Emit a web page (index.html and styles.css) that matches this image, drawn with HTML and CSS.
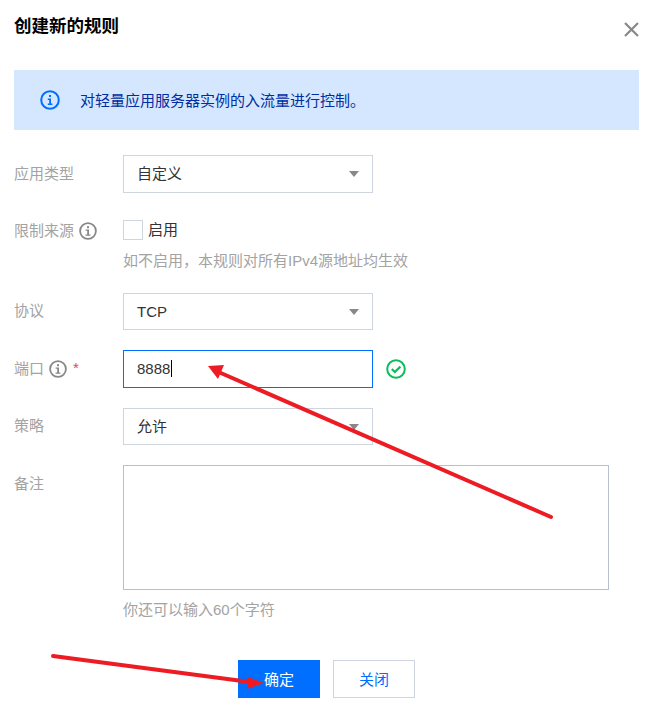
FILE: index.html
```html
<!DOCTYPE html>
<html>
<head>
    <title>创建新的规则</title>
    <link rel="stylesheet" href="styles.css">
</head>
<body>
    <div class="dialog">
        <div class="dialog-head">
            <h2>创建新的规则</h2>
            <svg class="close-icon" width="15" height="15" viewBox="0 0 15 15">
                <path d="M1 1 L14 14 M14 1 L1 14" stroke="#888" stroke-width="2.2" fill="none"/>
            </svg>
        </div>

        <div class="notice">
            <svg class="notice-icon" width="20" height="20" viewBox="0 0 20 20">
                <circle cx="10" cy="10" r="8.8" stroke="#006eff" stroke-width="2" fill="none"/>
                <rect x="9" y="5" width="2" height="2" fill="#006eff"/>
                <path d="M7.8 8.6 H11 V13.6 H12.4 V15 H7.8 V13.6 H9.2 V10 H7.8 Z" fill="#006eff"/>
            </svg>
            <span class="notice-text">对轻量应用服务器实例的入流量进行控制。</span>
        </div>

        <form class="rule-form">
            <div class="form-row row-type">
                <label class="form-label">应用类型</label>
                <div class="select">自定义</div>
            </div>

            <div class="form-row row-source">
                <label class="form-label">限制来源
                    <svg class="help-icon" width="18" height="18" viewBox="0 0 18 18">
                        <circle cx="9" cy="9" r="7.9" stroke="#888" stroke-width="1.8" fill="none"/>
                        <rect x="8" y="4.2" width="2" height="2" fill="#888"/>
                        <path d="M6.6 7.4 H10 V12.4 H11.4 V13.8 H6.6 V12.4 H8.2 V8.8 H6.6 Z" fill="#888"/>
                    </svg>
                </label>
                <div class="field-col">
                    <div class="check-line">
                        <span class="checkbox"></span>
                        <span class="check-text">启用</span>
                    </div>
                    <p class="hint hint-source">如不启用，本规则对所有IPv4源地址均生效</p>
                </div>
            </div>

            <div class="form-row">
                <label class="form-label">协议</label>
                <div class="select select-short">TCP</div>
            </div>

            <div class="form-row">
                <label class="form-label">端口
                    <svg class="help-icon" width="18" height="18" viewBox="0 0 18 18">
                        <circle cx="9" cy="9" r="7.9" stroke="#888" stroke-width="1.8" fill="none"/>
                        <rect x="8" y="4.2" width="2" height="2" fill="#888"/>
                        <path d="M6.6 7.4 H10 V12.4 H11.4 V13.8 H6.6 V12.4 H8.2 V8.8 H6.6 Z" fill="#888"/>
                    </svg>
                    <span class="required">*</span>
                </label>
                <div class="text-input">8888<span class="caret"></span></div>
                <svg class="ok-icon" width="20" height="20" viewBox="0 0 20 20">
                    <circle cx="10" cy="10" r="8.8" stroke="#0abf5b" stroke-width="2" fill="none"/>
                    <path d="M5.8 10 L8.8 13 L14.4 7.6" stroke="#0abf5b" stroke-width="2.2" fill="none"/>
                </svg>
            </div>

            <div class="form-row">
                <label class="form-label">策略</label>
                <div class="select select-short">允许</div>
            </div>

            <div class="form-row row-note">
                <label class="form-label">备注</label>
                <div class="field-col">
                    <div class="textarea"></div>
                    <p class="hint hint-note">你还可以输入60个字符</p>
                </div>
            </div>

            <div class="form-actions">
                <button type="button" class="btn btn-primary">确定</button>
                <button type="button" class="btn btn-plain">关闭</button>
            </div>
        </form>

        <!-- red arrows drawn over the screenshot -->
        <svg class="annotations" width="668" height="713" viewBox="0 0 668 713">
            <g fill="#ed1c24">
                <path d="M551 517 L214 370" stroke="#ed1c24" stroke-width="4" stroke-linecap="round"/>
                <path d="M208 366 L224 365 L218 379 Z"/>
                <path d="M53 656 L250 682" stroke="#ed1c24" stroke-width="4" stroke-linecap="round"/>
                <path d="M264 683 L248 677 L247 689 Z"/>
            </g>
        </svg>
    </div>
</body>
</html>
```

FILE: styles.css
```css
body {
    margin: 0;
    font-family: "Liberation Sans", "Noto Sans CJK SC", sans-serif;
    font-size: 15px;
    color: #000;
    background-color: #fff;
}
.dialog {
    position: relative;
    width: 668px;
    height: 713px;
    box-sizing: border-box;
    padding: 0 29px 0 14px;
    overflow: hidden;
}
.dialog-head {
    display: flex;
    justify-content: space-between;
    align-items: flex-start;
    height: 54px;
    margin-bottom: 16px;
}
.dialog-head h2 {
    margin: 13px 0 0;
    font-size: 17.5px;
    line-height: 26px;
    font-weight: bold;
    color: #000;
}
.close-icon {
    margin-top: 22px;
}
.notice {
    display: flex;
    align-items: center;
    height: 60px;
    padding-left: 26px;
    background-color: #d5e7ff;
    color: #002da0;
}
.notice-icon {
    margin-right: 20px;
}
.notice-text {
    margin-top: -2px;
}
.rule-form {
    margin-top: 25px;
}
.form-row {
    display: flex;
    align-items: center;
    margin-bottom: 20px;
}
.form-label {
    display: flex;
    align-items: center;
    width: 109px;
    flex: none;
    margin-top: -4px;
    color: #a3a3a3;
}
.help-icon {
    margin-left: 5px;
    margin-top: 4px;
}
.required {
    margin-left: 6px;
    color: #e54545;
}
.select, .text-input {
    box-sizing: border-box;
    width: 250px;
    height: 38px;
    line-height: 36px;
    padding-left: 13px;
    border: 1px solid #cfd5de;
    color: #333;
    position: relative;
}
.select-short {
    height: 37px;
    line-height: 35px;
}
.select::after {
    content: "";
    position: absolute;
    right: 13px;
    top: 50%;
    margin-top: -3px;
    border-left: 5px solid transparent;
    border-right: 5px solid transparent;
    border-top: 6px solid #888;
}
.text-input {
    border-color: #006eff;
}
.caret {
    display: inline-block;
    width: 1px;
    height: 17px;
    margin-left: 1px;
    vertical-align: -3px;
    background-color: #000;
}
.ok-icon {
    margin-left: 13px;
}
.row-type {
    margin-bottom: 27px;
}
.row-source, .row-note {
    align-items: flex-start;
}
.row-source {
    margin-bottom: 22px;
}
.row-source .form-label {
    height: 20px;
    margin-top: -1px;
}
.row-note {
    margin-bottom: 0;
}
.row-note .form-label {
    margin-top: 7px;
}
.check-line {
    display: flex;
    align-items: center;
    height: 20px;
    color: #333;
}
.check-text {
    margin-top: -4px;
}
.checkbox {
    box-sizing: border-box;
    width: 20px;
    height: 20px;
    margin-right: 5px;
    border: 1px solid #cfd5de;
}
.hint {
    margin: 0;
    color: #a3a3a3;
    line-height: 20px;
}
.hint-source {
    margin-top: 11px;
}
.hint-note {
    margin-top: 10px;
}
.textarea {
    box-sizing: border-box;
    width: 486px;
    height: 125px;
    border: 1px solid #b7c0cc;
}
.form-actions {
    display: flex;
    justify-content: center;
    gap: 13px;
    margin-top: 40px;
}
.btn {
    box-sizing: border-box;
    width: 82px;
    height: 38px;
    padding: 0 0 2px;
    font-family: inherit;
    font-size: 15px;
    border: 1px solid #cfd5de;
    background-color: #fff;
    color: #006eff;
}
.btn-primary {
    border-color: #006eff;
    background-color: #006eff;
    color: #fff;
}
.annotations {
    position: absolute;
    left: 0;
    top: 0;
    pointer-events: none;
}
```
